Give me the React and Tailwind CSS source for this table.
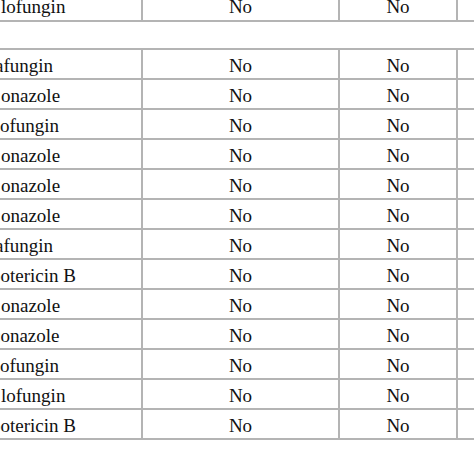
const rows = [
  { name: "afungin", shift: "-ml-[5px]" },
  { name: "onazole", shift: "ml-[1px]" },
  { name: "ofungin", shift: "ml-0" },
  { name: "onazole", shift: "ml-[1px]" },
  { name: "onazole", shift: "ml-[1px]" },
  { name: "onazole", shift: "ml-[1px]" },
  { name: "afungin", shift: "-ml-[5px]" },
  { name: "potericin B", shift: "-ml-[9px]" },
  { name: "onazole", shift: "ml-[1px]" },
  { name: "conazole", shift: "-ml-[8px]" },
  { name: "ofungin", shift: "ml-0" },
  { name: "lofungin", shift: "ml-[1px]" },
  { name: "potericin B", shift: "-ml-[9px]" },
];

function Row({ name, shift, top }) {
  const cell = top
    ? "h-[20px] leading-[14px] overflow-hidden"
    : "h-[28px] pt-[3px] leading-[25px] overflow-hidden";
  return (
    <div className="flex border-b-2 border-[#b4b4b4]">
      <div className={`w-[143px] border-r-2 border-[#b4b4b4] whitespace-nowrap ${cell}`}>
        <span className={`inline-block ${shift}`}>{name}</span>
      </div>
      <div className={`w-[197px] border-r-2 border-[#b4b4b4] text-center ${cell}`}>No</div>
      <div className={`w-[118px] border-r-2 border-[#b4b4b4] text-center ${cell}`}>No</div>
      <div className={`flex-1 ${cell}`}></div>
    </div>
  );
}

export default function App() {
  return (
    <div className="w-[474px] h-[474px] bg-white overflow-hidden text-[19px] text-[#111] font-['Liberation_Serif',serif]">
      <Row name="lofungin" shift="ml-[1px]" top />
      <div className="h-[28px] border-b-2 border-[#b4b4b4]"></div>
      {rows.map((r, i) => (
        <Row key={i} name={r.name} shift={r.shift} />
      ))}
    </div>
  );
}
